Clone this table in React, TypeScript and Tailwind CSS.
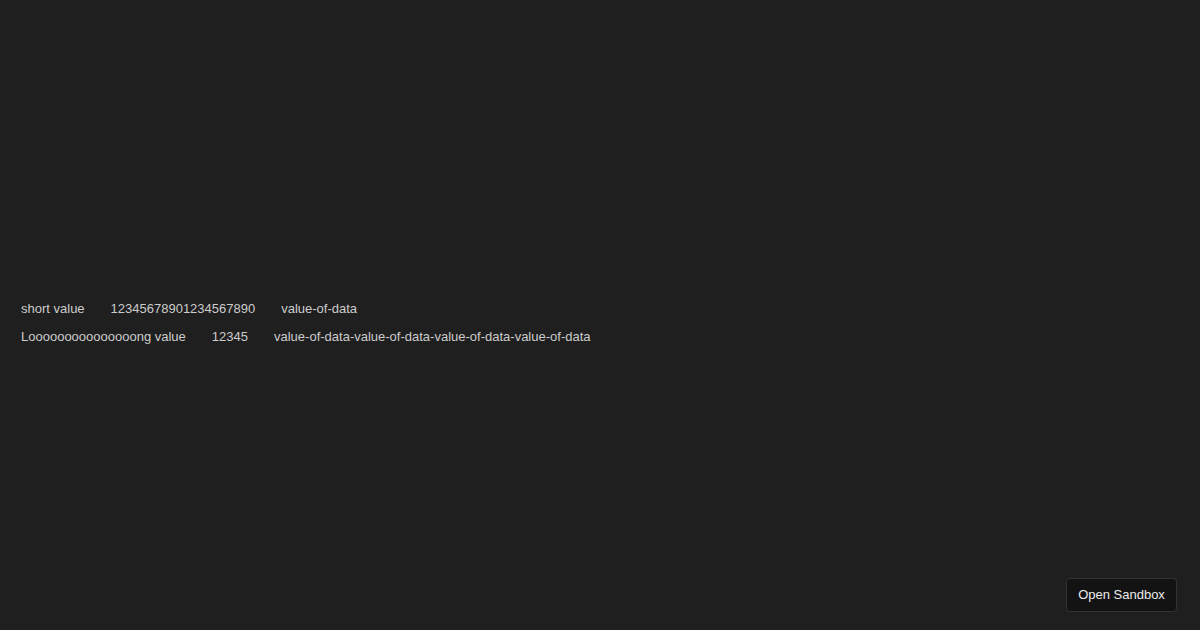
const rows = [
  ["short value", "12345678901234567890", "value-of-data"],
  [
    "L" + "o".repeat(15) + "ng value",
    "12345",
    "value-of-data-value-of-data-value-of-data-value-of-data",
  ],
];

export default function App() {
  return (
    <div className="relative h-[630px] w-[1200px] overflow-hidden bg-[#1f1f1f] font-['Liberation_Sans',Arial,sans-serif] text-[13px] text-[#cccccc]">
      {/* Data rows */}
      <div className="flex flex-col pl-2 pt-[295px]">
        {rows.map((row, i) => (
          <div key={i} className="flex h-[28px] items-center">
            {row.map((cell, j) => (
              <span key={j} className="whitespace-nowrap px-[13px]">
                {cell}
              </span>
            ))}
          </div>
        ))}
      </div>

      {/* Floating sandbox button */}
      <button className="absolute bottom-[18px] right-[23px] flex h-[34px] w-[111px] items-center justify-center rounded-[4px] border border-[#333333] bg-[#131313] text-[13px] text-[#ececec]">
        Open Sandbox
      </button>
    </div>
  );
}
